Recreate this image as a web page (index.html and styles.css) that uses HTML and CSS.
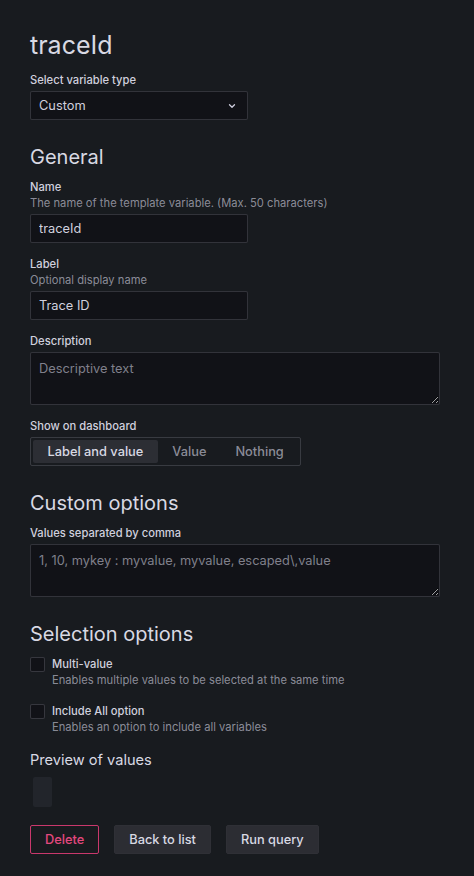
FILE: index.html
```html
<!DOCTYPE html>
<html lang="en">
<head>
<meta charset="utf-8">
<title>traceId</title>
<link rel="stylesheet" href="styles.css">
</head>
<body>
<main class="page">
  <h1 class="title">traceId</h1>

  <div class="field field-type">
    <div class="label">Select variable type</div>
    <div class="select">
      <span>Custom</span>
      <svg class="chevron" width="10" height="10" viewBox="0 0 10 10"><path d="M2.5 3.8 L5 6.3 L7.5 3.8" fill="none" stroke="#ccccdc" stroke-width="1.3" stroke-linecap="round" stroke-linejoin="round"/></svg>
    </div>
  </div>

  <h2 class="section">General</h2>

  <div class="field">
    <div class="label">Name</div>
    <div class="desc">The name of the template variable. (Max. 50 characters)</div>
    <input class="input" type="text" value="traceId">
  </div>

  <div class="field field-gap">
    <div class="label">Label</div>
    <div class="desc">Optional display name</div>
    <input class="input" type="text" value="Trace ID">
  </div>

  <div class="field field-gap">
    <div class="label">Description</div>
    <textarea class="textarea" placeholder="Descriptive text"></textarea>
  </div>

  <div class="field field-gap">
    <div class="label">Show on dashboard</div>
    <div class="radio-group">
      <span class="radio active">Label and value</span>
      <span class="radio">Value</span>
      <span class="radio">Nothing</span>
    </div>
  </div>

  <h2 class="section">Custom options</h2>

  <div class="field">
    <div class="label">Values separated by comma</div>
    <textarea class="textarea" placeholder="1, 10, mykey : myvalue, myvalue, escaped\,value"></textarea>
  </div>

  <h2 class="section">Selection options</h2>

  <div class="check-row">
    <span class="checkbox"></span>
    <div>
      <div class="label">Multi-value</div>
      <div class="desc">Enables multiple values to be selected at the same time</div>
    </div>
  </div>

  <div class="check-row check-gap">
    <span class="checkbox"></span>
    <div>
      <div class="label">Include All option</div>
      <div class="desc">Enables an option to include all variables</div>
    </div>
  </div>

  <h3 class="preview-title">Preview of values</h3>
  <div class="preview-box"></div>

  <div class="actions">
    <button class="btn btn-delete">Delete</button>
    <button class="btn btn-secondary">Back to list</button>
    <button class="btn btn-secondary">Run query</button>
  </div>
</main>
</body>
</html>
```

FILE: styles.css
```css
html, body {
  margin: 0;
  padding: 0;
  background: #181b1f;
}

body {
  font-family: Inter, "Noto Sans", sans-serif;
  color: #ccccdc;
  -webkit-font-smoothing: antialiased;
}

.page {
  padding: 29px 0 20px 30px;
  width: 410px;
}

.title {
  margin: 0;
  font-size: 25px;
  line-height: 32px;
  font-weight: 400;
  color: #d8d9e3;
}

.field-type {
  margin-top: 11px;
}

.label {
  font-size: 11.2px;
  line-height: 16px;
  font-weight: 500;
  color: #d0d0de;
}

.desc {
  font-size: 11.2px;
  line-height: 16px;
  font-weight: 400;
  color: rgba(204, 204, 220, 0.65);
}

.field .label + .select,
.field .label + .textarea,
.field .label + .radio-group,
.field .desc + .input {
  margin-top: 3px;
}

.select,
.input {
  box-sizing: border-box;
  display: flex;
  align-items: center;
  width: 218px;
  height: 29px;
  padding: 0 8px;
  background: #111217;
  border: 1px solid rgba(204, 204, 220, 0.18);
  border-radius: 2px;
  font-family: inherit;
  font-size: 12.8px;
  color: #d0d0de;
  outline: none;
}

.select {
  justify-content: space-between;
  padding-right: 10px;
}

.chevron {
  display: block;
}

.section {
  margin: 25px 0 10px 0;
  font-size: 20px;
  line-height: 24px;
  font-weight: 400;
  color: #d8d9e3;
}

.field-gap {
  margin-top: 13px;
}

.textarea {
  box-sizing: border-box;
  display: block;
  width: 410px;
  height: 53px;
  padding: 7px 8px;
  background: #111217;
  border: 1px solid rgba(204, 204, 220, 0.18);
  border-radius: 2px;
  font-family: inherit;
  font-size: 12.8px;
  line-height: 18px;
  color: #ccccdc;
  outline: none;
  resize: vertical;
}

.textarea::placeholder {
  color: rgba(204, 204, 220, 0.6);
}

.radio-group {
  box-sizing: border-box;
  display: inline-flex;
  height: 29px;
  padding: 2px;
  border: 1px solid rgba(204, 204, 220, 0.18);
  border-radius: 2px;
}

.radio {
  display: flex;
  align-items: center;
  padding: 0 14.5px;
  font-size: 12.8px;
  font-weight: 500;
  color: rgba(204, 204, 220, 0.65);
  border-radius: 2px;
}

.radio.active {
  background: #2c2e34;
  color: #d8d9e3;
}

.check-row {
  display: flex;
  gap: 7px;
  align-items: flex-start;
}

.check-gap {
  margin-top: 15px;
}

.checkbox {
  box-sizing: border-box;
  flex: none;
  width: 15px;
  height: 15px;
  margin-top: 1px;
  background: #111217;
  border: 1px solid rgba(204, 204, 220, 0.2);
  border-radius: 2px;
}

.preview-title {
  margin: 15px 0 0 0;
  font-size: 14.6px;
  line-height: 20px;
  font-weight: 400;
  color: #d8d9e3;
}

.preview-box {
  width: 19px;
  height: 30px;
  margin: 7px 0 0 3px;
  background: #22252b;
  border-radius: 2px;
}

.actions {
  display: flex;
  gap: 15px;
  margin-top: 18px;
}

.btn {
  box-sizing: border-box;
  height: 29px;
  padding: 0 14px;
  border-radius: 2px;
  font-family: inherit;
  font-size: 12.8px;
  font-weight: 500;
  cursor: pointer;
}

.btn-delete {
  background: transparent;
  border: 1px solid #c9386c;
  color: #e3487e;
}

.btn-secondary {
  background: #2c2d33;
  border: 1px solid #2f3036;
  color: #d8d9e3;
}
```
